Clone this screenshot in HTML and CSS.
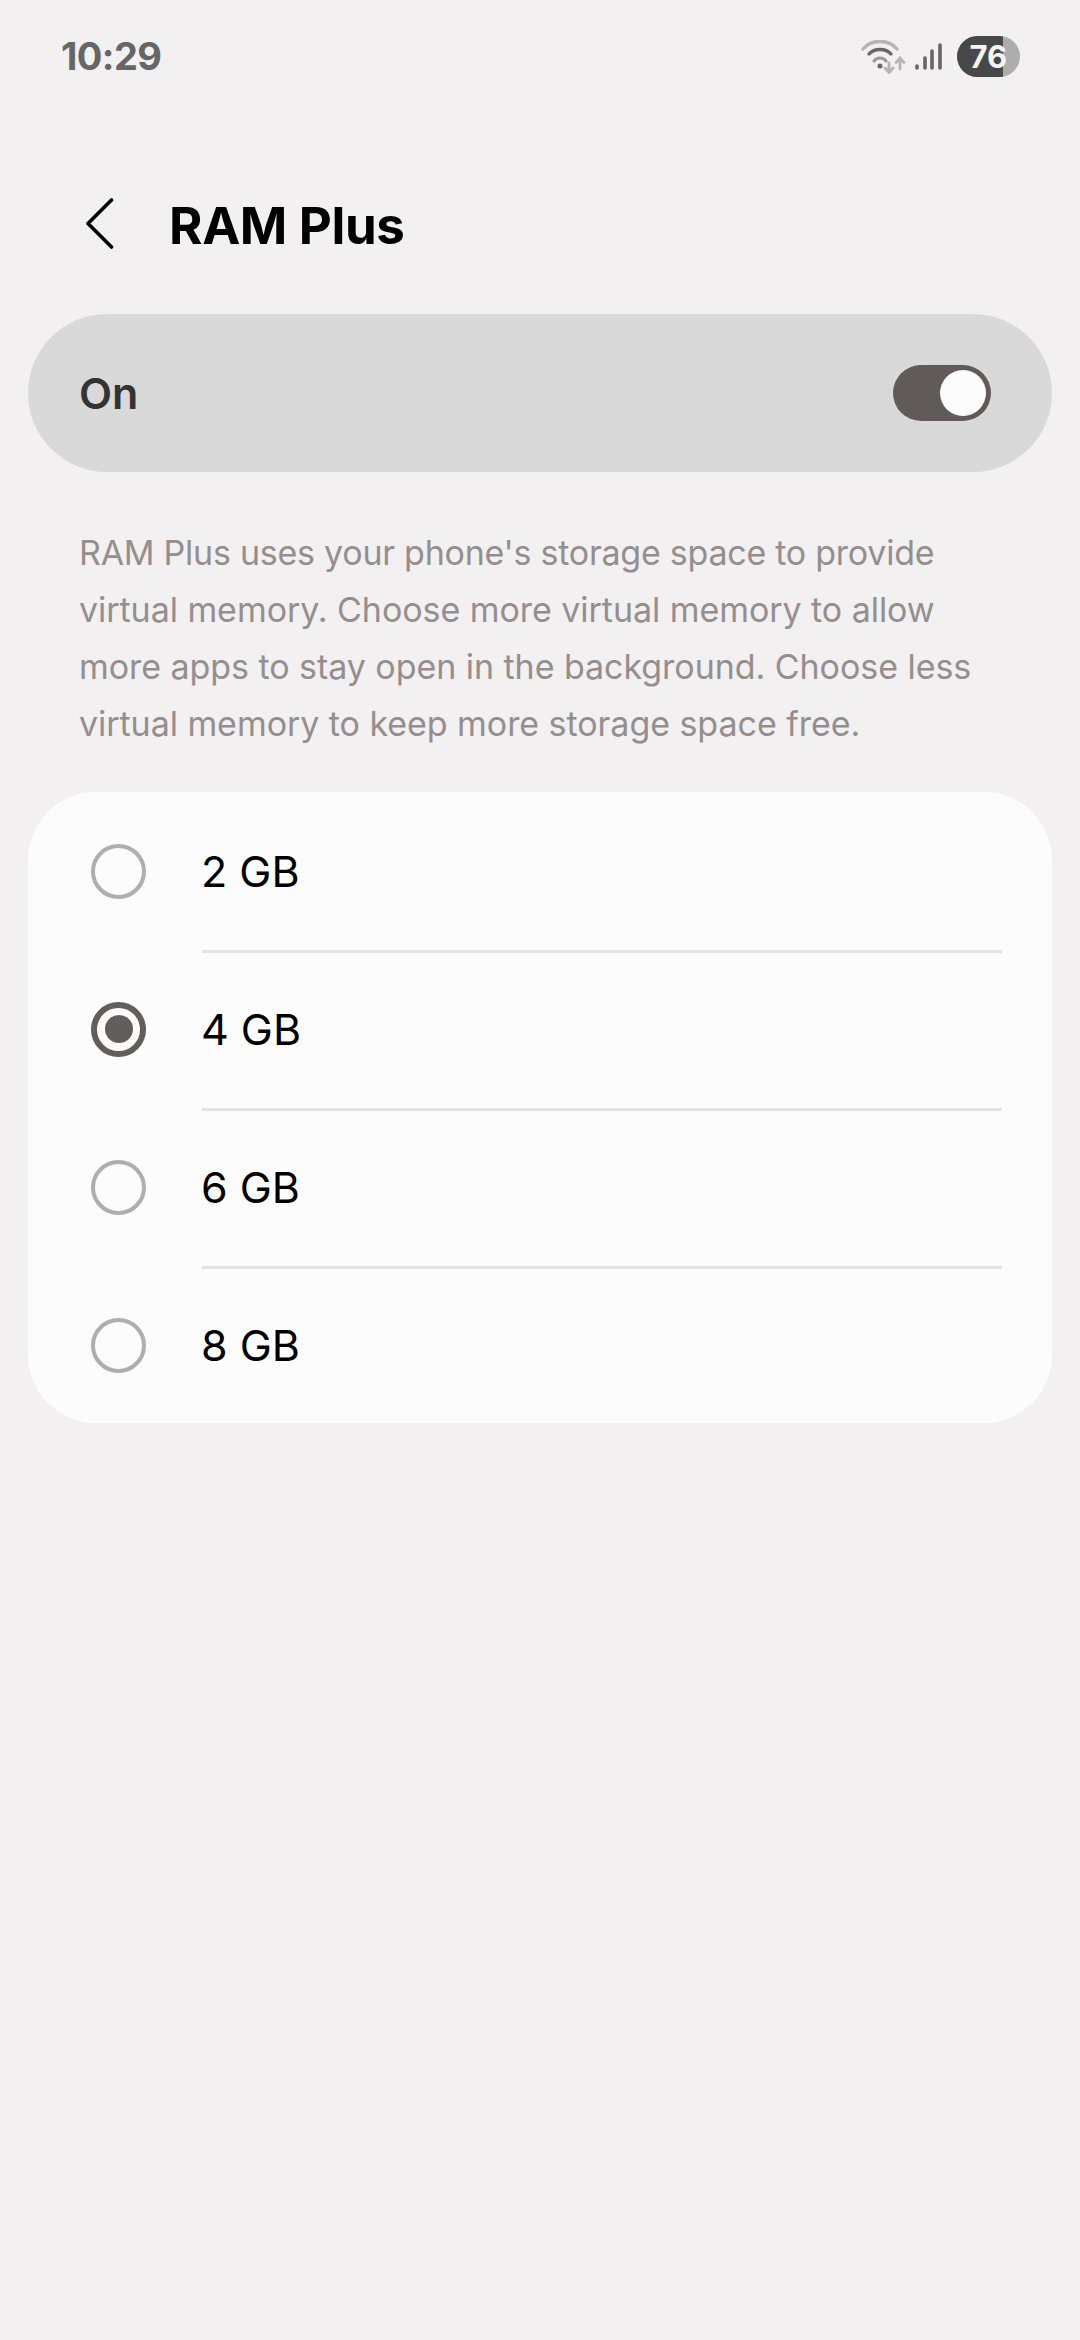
FILE: index.html
```html
<!DOCTYPE html>
<html lang="en">
<head>
<meta charset="utf-8">
<title>RAM Plus</title>
<link rel="stylesheet" href="styles.css">
</head>
<body>
<div class="status">
  <span class="time">10:29</span>
  <div class="status-icons">
    <svg class="wifi" width="46" height="36" viewBox="0 0 46 36" fill="none" stroke-linecap="round">
      <path d="M2 11 C10 1 28 1 36 11" stroke="#b4b4b4" stroke-width="3.4"/>
      <path d="M8 16 C13 10 25 10 30 16" stroke="#666" stroke-width="3.4"/>
      <path d="M13 23 C16 19 22 19 25 23" stroke="#999" stroke-width="3.2"/>
      <circle cx="19" cy="28" r="2.5" fill="#666"/>
      <path d="M28 25 V34 M24 30 L28 34.5 L32 30" stroke="#b4b4b4" stroke-width="2.8"/>
      <path d="M39 31 V20 M35 24.5 L39 20 L43 24.5" stroke="#b4b4b4" stroke-width="2.8"/>
    </svg>
    <svg class="signal" width="28" height="30" viewBox="0 0 28 30" fill="none" stroke="#666" stroke-width="3.6" stroke-linecap="round">
      <path d="M2 25 V27 M10 17 V27 M17 10 V27 M25 4 V27"/>
    </svg>
    <div class="battery"><div class="battery-fill"></div><span class="battery-num">76</span></div>
  </div>
</div>
<header class="appbar">
  <svg class="back" width="28" height="55" viewBox="0 0 28 55" fill="none" stroke="#000" stroke-width="3.6" stroke-linecap="round" stroke-linejoin="round">
    <path d="M25.5 2 L2 25.5 L25.5 49"/>
  </svg>
  <h1 class="title">RAM Plus</h1>
</header>
<div class="master">
  <span class="master-label">On</span>
  <div class="switch"><div class="knob"></div></div>
</div>
<p class="desc">RAM Plus uses your phone's storage space to provide virtual memory. Choose more virtual memory to allow more apps to stay open in the background. Choose less virtual memory to keep more storage space free.</p>
<div class="card">
  <div class="row"><span class="radio"></span><span class="label">2 GB</span></div>
  <div class="row"><span class="radio checked"></span><span class="label">4 GB</span></div>
  <div class="row"><span class="radio"></span><span class="label">6 GB</span></div>
  <div class="row"><span class="radio"></span><span class="label">8 GB</span></div>
</div>
</body>
</html>
```
FILE: styles.css
```css
* { box-sizing: border-box; }
html, body { margin: 0; padding: 0; }
body {
  width: 1080px;
  height: 2340px;
  overflow: hidden;
  background: #f2f0f1;
  font-family: Inter, "Liberation Sans", sans-serif;
  padding: 0 28px;
}
.status {
  height: 112px;
  margin: 0 -28px;
  padding: 0 60.5px 0 61px;
  display: flex;
  align-items: center;
  justify-content: space-between;
}
.time { font-size: 38px; font-weight: 700; color: #666; letter-spacing: -0.6px; }
.status-icons { display: flex; align-items: center; }
.signal { margin-left: 8px; margin-right: 14px; }
.battery {
  position: relative;
  width: 62.5px;
  height: 41px;
  border-radius: 21px;
  background: #adadad;
  overflow: hidden;
}
.battery-fill { width: 46px; height: 41px; background: #484848; }
.battery-num {
  position: absolute;
  inset: 0;
  text-align: center;
  line-height: 41px;
  font-size: 31px;
  font-weight: 700;
  color: #f4f4f4;
}
.appbar {
  height: 202px;
  display: flex;
  align-items: center;
  padding: 24px 0 0 58px;
  gap: 55px;
}
.title { margin: 0; font-size: 51px; font-weight: 700; color: #000; letter-spacing: -0.35px; }
.master {
  height: 158px;
  border-radius: 79px;
  background: #d9d9d9;
  display: flex;
  align-items: center;
  justify-content: space-between;
  padding: 0 61px 0 51px;
}
.master-label { font-size: 43px; font-weight: 600; color: #333; }
.switch {
  width: 98px;
  height: 56px;
  border-radius: 28px;
  background: #605a5a;
  display: flex;
  align-items: center;
  justify-content: flex-end;
  padding-right: 5px;
}
.knob { width: 46px; height: 46px; border-radius: 50%; background: #fcfcfc; }
.desc {
  margin: 52px 0 0;
  padding: 0 40px 0 51px;
  font-size: 34px;
  letter-spacing: -0.05px;
  line-height: 57px;
  color: #958e8e;
  height: 268px;
}
.desc::first-line { letter-spacing: -0.25px; }
.card {
  height: 631px;
  border-radius: 68px;
  background: #fdfcfc;
  padding: 0 50px 0 63px;
}
.row {
  height: 158px;
  display: flex;
  align-items: center;
  position: relative;
}
.row + .row::before {
  content: "";
  position: absolute;
  left: 111px;
  right: 0;
  top: 0;
  height: 3px;
  background: #e3e3e3;
}
.radio {
  width: 55px;
  height: 55px;
  border-radius: 50%;
  border: 4px solid #aeaeae;
  flex: none;
  display: flex;
  align-items: center;
  justify-content: center;
}
.radio.checked { border: 6px solid #635e5e; }
.radio.checked::after {
  content: "";
  width: 28px;
  height: 28px;
  border-radius: 50%;
  background: #635e5e;
}
.label { margin-left: 55px; font-size: 43px; color: #000; font-weight: 400; }
```
